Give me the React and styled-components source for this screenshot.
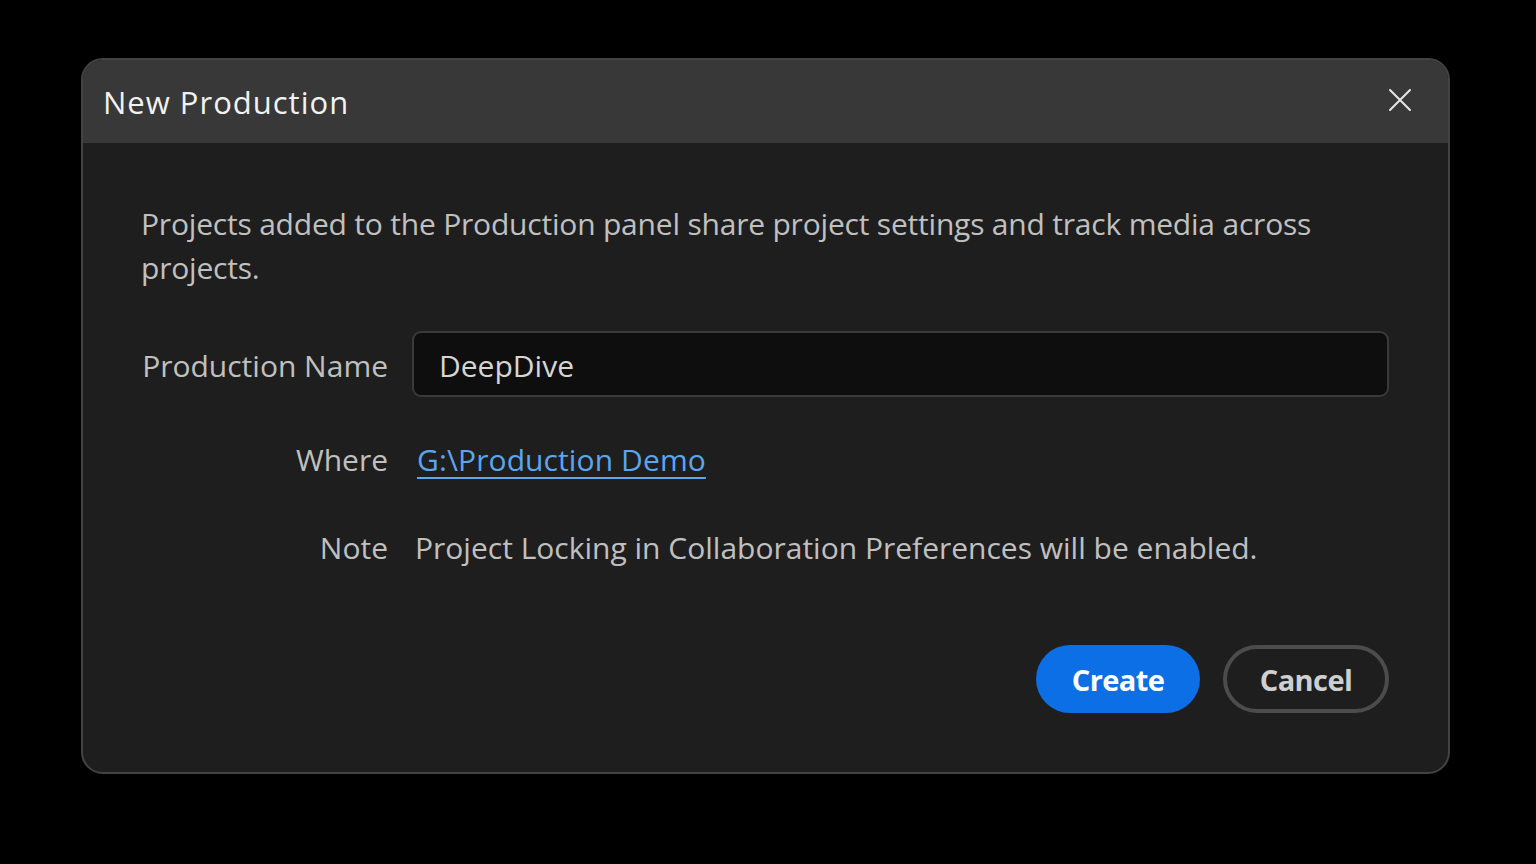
import React from "react";
import styled, { createGlobalStyle } from "styled-components";

const Global = createGlobalStyle`
  html, body { margin: 0; padding: 0; background: #000; }
  body { font-family: "Open Sans", "Noto Sans", sans-serif; }
  * { box-sizing: border-box; }
`;

const Page = styled.div`
  width: 1536px;
  height: 864px;
  padding: 58px 0 0 81px;
`;

const Dialog = styled.div`
  width: 1369px;
  height: 716px;
  border: 2px solid #434343;
  border-radius: 22px;
  background: #1e1e1e;
  overflow: hidden;
  display: flex;
  flex-direction: column;
`;

const Header = styled.div`
  height: 83px;
  flex: none;
  background: #383838;
  display: flex;
  align-items: center;
  justify-content: space-between;
  padding: 0 36px 0 20px;
`;

const Title = styled.h1`
  margin: 0;
  font-size: 31px;
  font-weight: 400;
  color: #f2f2f2;
  letter-spacing: 1px;
`;

const CloseButton = styled.button`
  background: none;
  border: none;
  padding: 0 0 4px;
  width: 24px;
  height: 28px;
  display: flex;
  align-items: center;
  justify-content: center;
  cursor: pointer;
`;

const Body = styled.div`
  flex: 1;
  padding: 59px 59px 0 58px;
  display: flex;
  flex-direction: column;
`;

const Description = styled.p`
  margin: 0;
  font-size: 30px;
  line-height: 44px;
  color: #c0c0c0;
  letter-spacing: -0.2px;
  padding-right: 30px;
`;

const Form = styled.div`
  margin-top: 41px;
  display: grid;
  grid-template-columns: 247px 1fr;
  column-gap: 24px;
  align-items: center;
`;

const Label = styled.div`
  text-align: right;
  font-size: 30px;
  line-height: 44px;
  color: #c0c0c0;
  letter-spacing: 0;
  padding-top: 3px;
  margin-top: ${(p) => p.$mt || 0}px;
`;

const Input = styled.input`
  height: 66px;
  width: 100%;
  background: #0e0e0e;
  border: 2px solid #3a3a3a;
  border-radius: 9px;
  padding: 2px 25px 0;
  font-family: inherit;
  font-size: 30px;
  color: #d6d6d6;
  letter-spacing: 0;
  outline: none;
`;

const Value = styled.div`
  font-size: 30px;
  line-height: 44px;
  color: #c0c0c0;
  letter-spacing: 0;
  padding-top: 3px;
  padding-left: ${(p) => p.$pl || 0}px;
  margin-top: ${(p) => p.$mt || 0}px;
`;

const Link = styled.a`
  color: #5aa6ef;
  letter-spacing: 0.1px;
  text-decoration: underline;
  text-decoration-thickness: 2px;
  text-underline-offset: 6px;
  cursor: pointer;
`;

const Actions = styled.div`
  margin-top: 75px;
  display: flex;
  justify-content: flex-end;
  gap: 23px;
`;

const Button = styled.button`
  height: 68px;
  min-width: ${(p) => p.$w}px;
  border-radius: 34px;
  font-family: inherit;
  font-size: 29px;
  font-weight: 700;
  letter-spacing: -0.6px;
  cursor: pointer;
  background: ${(p) => (p.$primary ? "#0d6fe6" : "transparent")};
  color: ${(p) => (p.$primary ? "#ffffff" : "#cfcfcf")};
  border: ${(p) => (p.$primary ? "none" : "4px solid #4c4c4c")};
  padding: 0 28px 0;
`;

export default function App() {
  return (
    <>
      <Global />
      <Page>
        <Dialog>
          <Header>
            <Title>New Production</Title>
            <CloseButton aria-label="Close">
              <svg width="22" height="22" viewBox="0 0 22 22">
                <path d="M1 1 L21 21 M21 1 L1 21" stroke="#e6e6e6" strokeWidth="2" strokeLinecap="round" />
              </svg>
            </CloseButton>
          </Header>
          <Body>
            <Description>
              Projects added to the Production panel share project settings and track media across projects.
            </Description>
            <Form>
              <Label>Production Name</Label>
              <Input defaultValue="DeepDive" />
              <Label $mt={38}>Where</Label>
              <Value $pl={5} $mt={38}>
                <Link>G:\Production Demo</Link>
              </Value>
              <Label $mt={41}>Note</Label>
              <Value $pl={3} $mt={41}>
                Project Locking in Collaboration Preferences will be enabled.
              </Value>
            </Form>
            <Actions>
              <Button $primary $w={164}>Create</Button>
              <Button $w={166}>Cancel</Button>
            </Actions>
          </Body>
        </Dialog>
      </Page>
    </>
  );
}
